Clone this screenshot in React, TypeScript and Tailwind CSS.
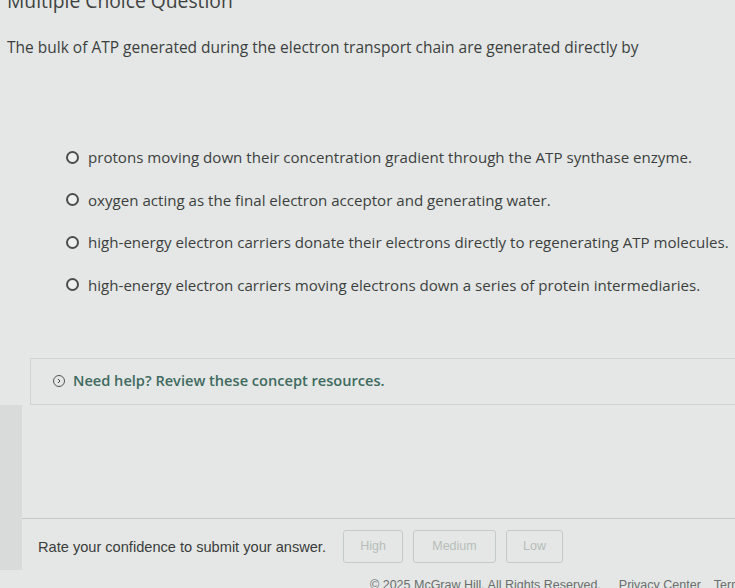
import React from "react";

const options = [
  "protons moving down their concentration gradient through the ATP synthase enzyme.",
  "oxygen acting as the final electron acceptor and generating water.",
  "high-energy electron carriers donate their electrons directly to regenerating ATP molecules.",
  "high-energy electron carriers moving electrons down a series of protein intermediaries.",
];

export default function App() {
  return (
    <div
      className="w-[735px] h-[588px] overflow-hidden bg-[#e4e7e5] text-[#3c3f3e] relative"
      style={{ fontFamily: "'Open Sans', 'Liberation Sans', sans-serif" }}
    >
      <div className="pl-[7px] -mt-[11px] text-[19.3px] leading-[24px] text-[#3f4241]">Multiple Choice Question</div>
      <div className="pl-[7px] mt-[24px] text-[15.5px] leading-[20px]">
        The bulk of ATP generated during the electron transport chain are generated directly by
      </div>
      <div className="mt-[90px] pl-[66px] flex flex-col gap-[22.5px]">
        {options.map((o) => (
          <label key={o} className="flex items-center gap-[9px] text-[15.1px] leading-[20px]">
            <span className="w-[13px] h-[13px] rounded-full border-[2px] border-[#4a4f4d] bg-[#eef0ef] shrink-0" />
            <span className="whitespace-nowrap">{o}</span>
          </label>
        ))}
      </div>
      <div className="mt-[63px] ml-[30px] h-[47px] border-t border-b border-l border-[#cfd3d1] flex items-center pl-[22px] gap-[8px]">
        <span className="w-[12px] h-[12px] rounded-full border border-[#555] flex items-center justify-center">
          <svg width="6" height="6" viewBox="0 0 6 6">
            <path d="M2 1 L4 3 L2 5" stroke="#444" strokeWidth="1" fill="none" />
          </svg>
        </span>
        <span className="text-[14.6px] font-semibold text-[#3e6a60]">Need help? Review these concept resources.</span>
      </div>
      <div className="flex">
        <div className="w-[22px] bg-[#d8dbd9] h-[165px]" />
        <div className="flex-1 flex flex-col">
          <div className="h-[113px]" />
          <div className="h-[52px] border-t border-[#c6cbc8] flex items-center pl-[16px] pt-[4px]">
            <span className="text-[14.6px] text-[#3a3d3c] mt-[4px]" style={{ fontFamily: "'Liberation Sans', sans-serif" }}>
              Rate your confidence to submit your answer.
            </span>
            <div className="ml-[17px] flex gap-[10px] items-center">
              <button className="w-[60px] h-[33px] border border-[#c4ccc8] rounded-[3px] text-[12.5px] text-[#b7bdba]" style={{ fontFamily: "'Liberation Sans', sans-serif" }}>High</button>
              <button className="w-[83px] h-[33px] border border-[#c4ccc8] rounded-[3px] text-[12.5px] text-[#b7bdba]" style={{ fontFamily: "'Liberation Sans', sans-serif" }}>Medium</button>
              <button className="w-[57px] h-[33px] border border-[#c4ccc8] rounded-[3px] text-[12.5px] text-[#b7bdba]" style={{ fontFamily: "'Liberation Sans', sans-serif" }}>Low</button>
            </div>
          </div>
        </div>
      </div>
      <div className="mt-[7px] pl-[370px] flex text-[12.5px] leading-[16px] text-[#6a6e6c] whitespace-nowrap" style={{ fontFamily: "'Liberation Sans', sans-serif" }}>
        <span>© 2025 McGraw Hill. All Rights Reserved.</span>
        <span className="underline ml-[18px]">Privacy Center</span>
        <span className="underline ml-[13px]">Terms</span>
      </div>
    </div>
  );
}
